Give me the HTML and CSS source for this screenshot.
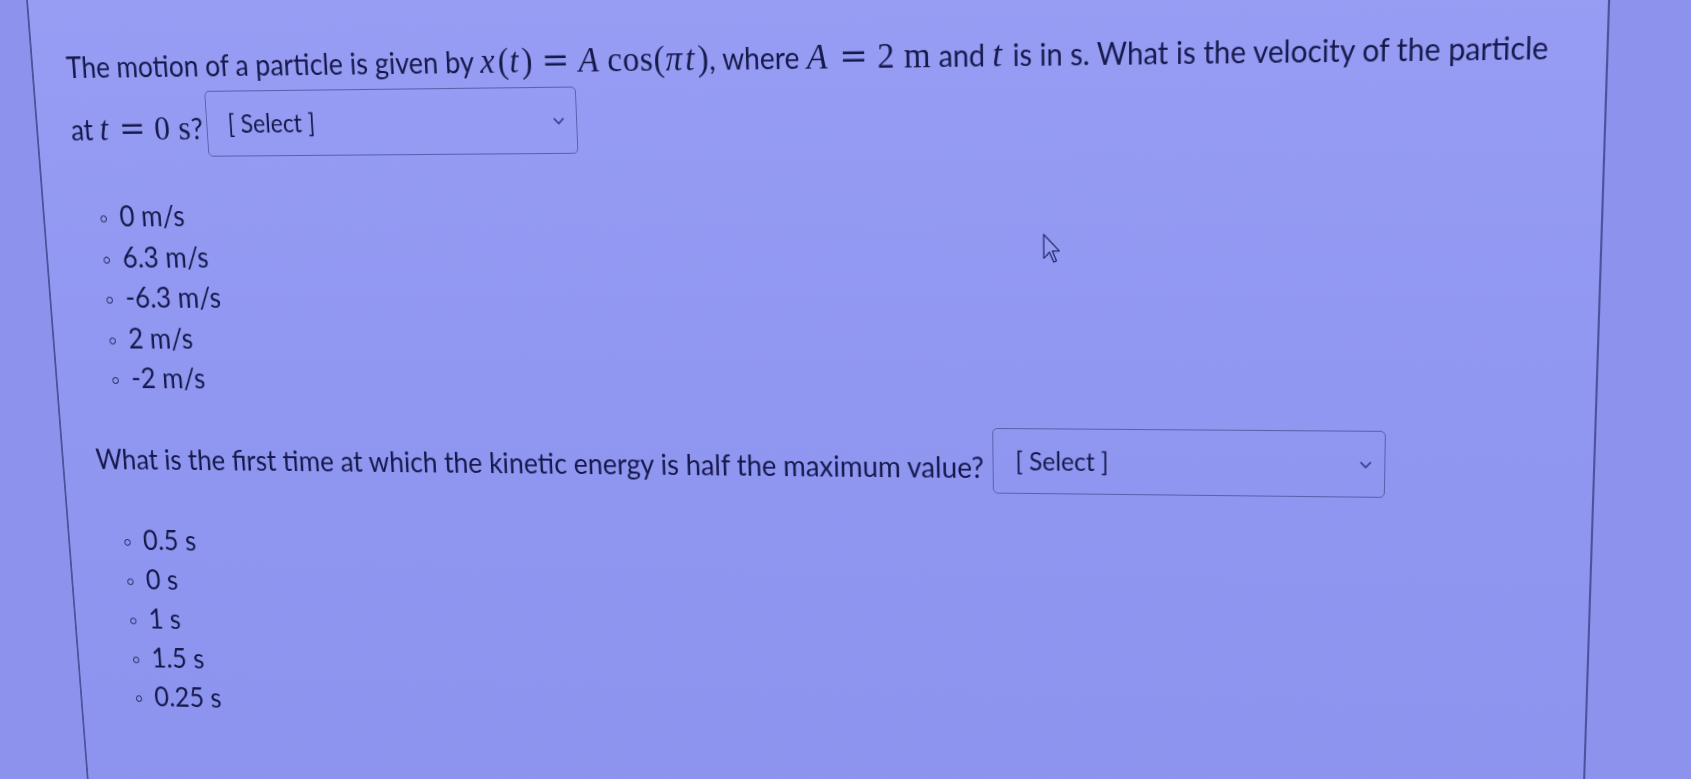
FILE: index.html
```html
<!DOCTYPE html>
<html lang="en">
<head>
<meta charset="utf-8">
<title>Quiz question</title>
<link rel="stylesheet" href="styles.css">
</head>
<body>
<div class="page">
  <div class="panel">
    <div class="question">
      <p class="stem">The motion of a particle is given by <span class="math"><i>x</i>(<i>t</i>)<span class="rel">=</span><i>A</i><span class="op">cos</span>(<i>π</i><i>t</i>)</span>, where <span class="math"><i>A</i><span class="rel">=</span>2<span class="unit">m</span></span> and <span class="math"><i>t</i></span> is in s. What is the velocity of the particle</p>
      <div class="answer-row row-1">
        <span class="prompt">at <span class="math"><i>t</i><span class="rel">=</span>0<span class="unit">s</span></span>?</span>
        <div class="select select-1">
          <span class="select-label">[ Select ]</span>
          <svg class="chevron" viewBox="0 0 12 7" width="12" height="7"><path d="M1 1 L6 6 L11 1" fill="none" stroke="currentColor" stroke-width="1.4"/></svg>
        </div>
      </div>
      <ul class="options options-1">
        <li>0 m/s</li>
        <li>6.3 m/s</li>
        <li>-6.3 m/s</li>
        <li>2 m/s</li>
        <li>-2 m/s</li>
      </ul>
    </div>
    <div class="question">
      <div class="answer-row row-2">
        <span class="prompt">What is the first time at which the kinetic energy is half the maximum value?</span>
        <div class="select select-2">
          <span class="select-label">[ Select ]</span>
          <svg class="chevron" viewBox="0 0 12 7" width="12" height="7"><path d="M1 1 L6 6 L11 1" fill="none" stroke="currentColor" stroke-width="1.4"/></svg>
        </div>
      </div>
      <ul class="options options-2">
        <li>0.5 s</li>
        <li>0 s</li>
        <li>1 s</li>
        <li>1.5 s</li>
        <li>0.25 s</li>
      </ul>
    </div>
  </div>
  <svg class="cursor" viewBox="0 0 18 28" width="18" height="28"><path d="M1 1 V23.4 L6.6 17.8 L10.8 27 L13.4 25.8 L9.4 16.6 H16.4 Z" fill="#969cf2" stroke="#2a2e72" stroke-width="1.3" stroke-linejoin="round"/></svg>
</div>
</body>
</html>
```

FILE: styles.css
```css
html {
  background: #8d93ec;
}

body {
  margin: 0;
  overflow: hidden;
  font-family: Lato, "Open Sans", "Liberation Sans", sans-serif;
  color: #16194b;
}

/* flat page, projected with the photo's perspective */
.page {
  position: relative;
  width: 1720px;
  height: 860px;
  transform-origin: 0 0;
  transform: matrix3d(0.913274, -0.0158862, 0, -0.000054075,
                      0.082292, 1.031396, 0, 0.0000716547,
                      0, 0, 1, 0,
                      -3.392, -1.36186, 0, 0.9963387);
}

.panel {
  box-sizing: border-box;
  margin-left: 32px;
  width: 1576px;
  height: 860px;
  padding: 47px 0 0 36px;
  border-left: 2px solid #4d529c;
  border-right: 2px solid #4d529c;
  background: linear-gradient(180deg, #979df3 0%, #9097f1 45%, #8c93ee 100%);
  font-size: 28.25px;
  line-height: 40.5px;
}

.stem {
  margin: 0;
  white-space: nowrap;
}

.math {
  font-family: "Liberation Serif", "DejaVu Serif", serif;
  font-size: 1.2em;
  line-height: 1;
  letter-spacing: 0.02em;
}

.math i {
  font-style: italic;
  margin-right: 0.07em;
}

.rel {
  font-family: "DejaVu Serif", "Liberation Serif", serif;
  padding: 0 0.26em;
}

.op {
  margin-left: 0.1667em;
}

.unit {
  margin-left: 0.25em;
}

.answer-row {
  display: flex;
  align-items: flex-start;
}

.row-1 {
  margin-top: 4.5px;
}

.row-2 {
  margin-top: 24.5px;
}

.prompt {
  margin-top: 16px;
  white-space: nowrap;
}

.row-2 .prompt {
  margin-top: 18px;
}

.select {
  box-sizing: border-box;
  width: 390px;
  height: 64px;
  margin-left: 4px;
  display: flex;
  align-items: center;
  justify-content: space-between;
  padding: 0 12px 0 22px;
  border: 1.2px solid #5a60ad;
  border-radius: 5px;
  font-size: 24.5px;
  line-height: 1.2;
}

.select-2 {
  width: 387px;
  margin-left: 9px;
}

.chevron {
  color: #2a2e72;
}

.options {
  list-style: none;
  margin: 37px 0 0;
  padding-left: 25px;
}

.options li::before {
  content: "";
  display: inline-block;
  box-sizing: border-box;
  width: 7px;
  height: 7px;
  margin-right: 14px;
  border: 1.4px solid currentColor;
  border-radius: 50%;
  vertical-align: middle;
}

.options-2 {
  margin-top: 37px;
  line-height: 41px;
}

.cursor {
  position: absolute;
  left: 1073px;
  top: 234px;
}
```
